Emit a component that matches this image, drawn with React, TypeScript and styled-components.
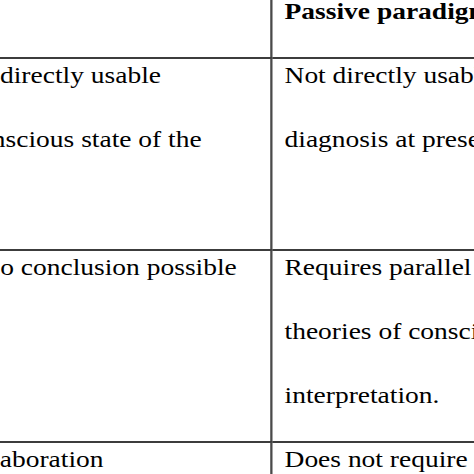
import React from 'react';
import styled, { createGlobalStyle } from 'styled-components';

// the source figure is stretched sideways, so the table is laid out at 24px
// and widened as a whole
const STRETCH = 1.145;

const GlobalStyle = createGlobalStyle`
    html, body {
        margin: 0;
        padding: 0;
        background: #ffffff;
        overflow: hidden;
    }
`;

const Page = styled.div`
    width: 474px;
    height: 474px;
    overflow: hidden;
    background: #ffffff;
`;

const Table = styled.div`
    display: grid;
    grid-template-columns: 238px 400px;
    grid-template-rows: 57px 192px 192px 120px;
    transform: scaleX(${STRETCH});
    transform-origin: 0 0;
    font-family: 'Liberation Serif', 'Times New Roman', serif;
    font-size: 24px;
    color: #000000;
`;

const Cell = styled.div<{ $side: 'left' | 'right'; $head?: boolean }>`
    box-sizing: border-box;
    overflow: hidden;
    display: flex;
    flex-direction: column;
    gap: 36px;
    padding: ${(p) => (p.$head ? '0' : '2px')} 0 0
        ${(p) => (p.$side === 'right' ? '10.5px' : '0')};
    border-top: ${(p) => (p.$head ? 'none' : '2px solid #3c3c3c')};
    border-right: ${(p) =>
        p.$side === 'left' ? '2px solid #4a4a4a' : 'none'};
`;

const Line = styled.span<{ $shift?: number }>`
    display: block;
    height: 28px;
    line-height: 28px;
    white-space: nowrap;
    margin-left: ${(p) => p.$shift ?? 0}px;
`;

const HeadLine = styled(Line)`
    height: 22px;
    line-height: 22px;
    font-weight: bold;
`;

export default function App() {
    return (
        <Page>
            <GlobalStyle />
            <Table>
                <Cell $side={'left'} $head />
                <Cell $side={'right'} $head>
                    <HeadLine>Passive paradigm</HeadLine>
                </Cell>

                <Cell $side={'left'}>
                    <Line>directly usable</Line>
                    <Line $shift={-29.8}>conscious state of the</Line>
                </Cell>
                <Cell $side={'right'}>
                    <Line>Not directly usable for</Line>
                    <Line>diagnosis at present</Line>
                </Cell>

                <Cell $side={'left'}>
                    <Line $shift={-17.2}>No conclusion possible</Line>
                </Cell>
                <Cell $side={'right'}>
                    <Line>Requires parallel</Line>
                    <Line>theories of consciousness</Line>
                    <Line>interpretation.</Line>
                </Cell>

                <Cell $side={'left'}>
                    <Line $shift={-17.5}>elaboration</Line>
                </Cell>
                <Cell $side={'right'}>
                    <Line>Does not require</Line>
                </Cell>
            </Table>
        </Page>
    );
}
